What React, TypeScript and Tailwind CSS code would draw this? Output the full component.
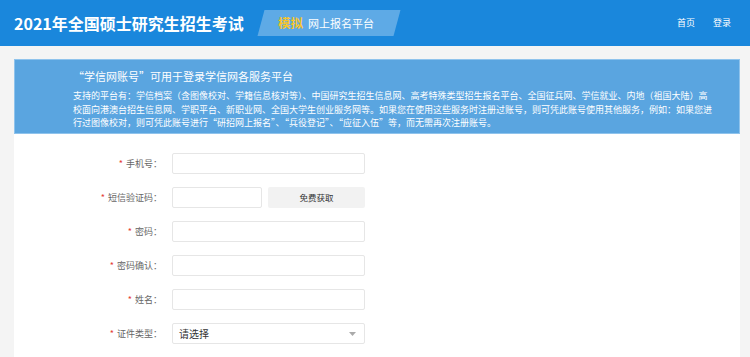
const fields = [
  { label: '手机号', kind: 'input' },
  { label: '短信验证码', kind: 'sms' },
  { label: '密码', kind: 'input' },
  { label: '密码确认', kind: 'input' },
  { label: '姓名', kind: 'input' },
  { label: '证件类型', kind: 'select' },
  { label: '证件号码', kind: 'input' },
]

const inputCls = 'h-[21px] rounded-[2px] border border-[#e6e6e6] bg-white'

export default function App() {
  return (
    <div
      className="min-h-[357px] bg-[#f4f4f4] text-[#333]"
      style={{ fontFamily: '"Noto Sans CJK SC", "Noto Sans", sans-serif' }}
    >
      <header className="flex h-[46px] items-center bg-[#1a87dc] pl-[14px] pr-[19px]">
        <h1 className="text-[16px] font-bold leading-none text-white">2021年全国硕士研究生招生考试</h1>
        <div className="ml-[17px] flex h-[26px] w-[136px] -skew-x-[15deg] items-center bg-[#5eaae6] pl-[17px]">
          <div className="flex skew-x-[15deg] items-baseline">
            <span className="text-[12.5px] font-bold text-[#f7c52a]">模拟</span>
            <span className="ml-[5px] text-[11px] text-white">网上报名平台</span>
          </div>
        </div>
        <nav className="ml-auto flex gap-[18px] text-[9px] text-white">
          <a>首页</a>
          <a>登录</a>
        </nav>
      </header>

      <main className="ml-[14px] mr-[10px] mt-[13px] bg-white pb-6">
        <div className="h-[75px] border border-[#8fc3ec] bg-[#5aa5e0] pl-[58px] pt-[8px] text-white">
          <p className="text-[11px] leading-[16px]">“学信网账号”可用于登录学信网各服务平台</p>
          <p className="mt-[5px] w-[641px] text-[9px] leading-[13.5px]">
            支持的平台有：学信档案（含图像校对、学籍信息核对等）、中国研究生招生信息网、高考特殊类型招生报名平台、全国征兵网、学信就业、内地（祖国大陆）高校面向港澳台招生信息网、学职平台、新职业网、全国大学生创业服务网等。如果您在使用这些服务时注册过账号，则可凭此账号使用其他服务，例如：如果您进行过图像校对，则可凭此账号进行“研招网上报名”、“兵役登记”、“应征入伍”等，而无需再次注册账号。
          </p>
        </div>

        <form className="flex flex-col gap-[13px] pt-[19px]">
          {fields.map((f) => (
            <div key={f.label} className="flex items-center">
              <label className="w-[148px] text-right text-[9px] text-[#666]">
                <span className="mr-[3px] text-[#e53935]">*</span>
                {f.label}：
              </label>
              <div className="ml-[10px] flex">
                {f.kind === 'input' && <input className={`${inputCls} w-[193px]`} />}
                {f.kind === 'sms' && (
                  <>
                    <input className={`${inputCls} w-[90px]`} />
                    <button
                      type="button"
                      className="ml-[6px] h-[21px] w-[97px] rounded-[2px] bg-[#f2f2f2] text-[8.5px] text-[#333]"
                    >
                      免费获取
                    </button>
                  </>
                )}
                {f.kind === 'select' && (
                  <div className={`${inputCls} flex w-[193px] items-center justify-between pl-[6px] pr-[8px]`}>
                    <span className="text-[10px] text-[#333]">请选择</span>
                    <svg width="7" height="4" viewBox="0 0 7 4">
                      <path d="M0 0h7L3.5 4z" fill="#aaa" />
                    </svg>
                  </div>
                )}
              </div>
            </div>
          ))}
        </form>
      </main>
    </div>
  )
}
